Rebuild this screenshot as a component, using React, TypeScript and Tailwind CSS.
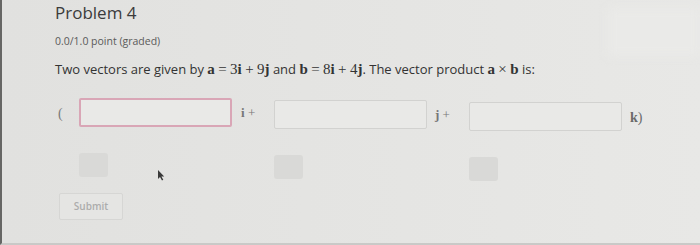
import React from 'react';

// math pieces rendered like KaTeX with a serif face
const M = ({ children, bold }: { children: React.ReactNode; bold?: boolean }) => (
  <span className={`font-['Liberation_Serif',serif] text-[15px] ${bold ? 'font-bold' : ''}`}>{children}</span>
);

function AnswerColumn({ pink, offset }: { pink?: boolean; offset: string }) {
  return (
    <div className={`flex flex-col ${offset}`}>
      <div
        className={`h-[29px] w-[153px] rounded-[2px] bg-[#e9e9e7] ${
          pink ? 'border-2 border-[#d9a6b6]' : 'border-[1.5px] border-[#d2d2d0]'
        }`}
      />
      <div className="mt-[26px] h-[24px] w-[29px] rounded-[3px] bg-[#d9d9d7]" />
    </div>
  );
}

export default function App() {
  return (
    <div className="relative h-[245px] w-[700px] overflow-hidden border-l-2 border-b-2 border-l-[#666664] border-b-[#c9c9c7] bg-linear-to-r from-[#e1e1df] to-[#e8e8e6] font-['Open_Sans',sans-serif]">
      {/* glare in the upper right */}
      <div className="absolute right-0 top-[8px] h-[48px] w-[92px] bg-[#eaeae8] blur-[5px]" />

      <div className="relative pl-[53px] pt-[1px]">
        <h2 className="text-[17px] leading-[24px] text-[#3b3b3b]">Problem 4</h2>
        <div className="mt-[9px] text-[10.5px] leading-[14px] text-[#5a5a5a]">0.0/1.0 point (graded)</div>

        <p className="mt-[12px] text-[13px] leading-[18px] text-[#333333]">
          Two vectors are given by <M bold>a</M> <M>=</M> <M>3</M>
          <M bold>i</M> <M>+</M> <M>9</M>
          <M bold>j</M> and <M bold>b</M> <M>=</M> <M>8</M>
          <M bold>i</M> <M>+</M> <M>4</M>
          <M bold>j</M>. The vector product <M bold>a</M> <M>×</M> <M bold>b</M> is:
        </p>

        <div className="mt-[20px] flex items-start">
          <span className="mt-[5px] w-[24px] pl-[3px] font-['Liberation_Serif',serif] text-[14px] text-[#7a7a7a]">(</span>
          <AnswerColumn pink offset="" />
          <span className="mt-[5px] w-[42px] pl-[9px] font-['Liberation_Serif',serif] text-[13px] text-[#777777]">
            <b>i</b> +
          </span>
          <AnswerColumn offset="mt-[2px]" />
          <span className="mt-[7px] w-[42px] pl-[8px] font-['Liberation_Serif',serif] text-[13px] text-[#777777]">
            <b>j</b> +
          </span>
          <AnswerColumn offset="mt-[4px]" />
          <span className="mt-[9px] pl-[8px] font-['Liberation_Serif',serif] text-[14px] text-[#6a6a6a]">
            <b>k</b>)
          </span>
        </div>

        <button className="mt-[12px] ml-[4px] h-[27px] w-[64px] rounded-[2px] border border-[#d6d6d4] bg-[#e5e5e3] text-[10px] font-semibold text-[#acacac]">
          Submit
        </button>
      </div>

      {/* mouse pointer */}
      <svg className="absolute left-[155px] top-[170px]" width="8" height="11" viewBox="0 0 8 11">
        <path d="M1 0 L1 9 L3 7 L5 10.5 L6.3 9.8 L4.4 6.6 L7.2 6.4 Z" fill="#3a3a3a" />
      </svg>
    </div>
  );
}
